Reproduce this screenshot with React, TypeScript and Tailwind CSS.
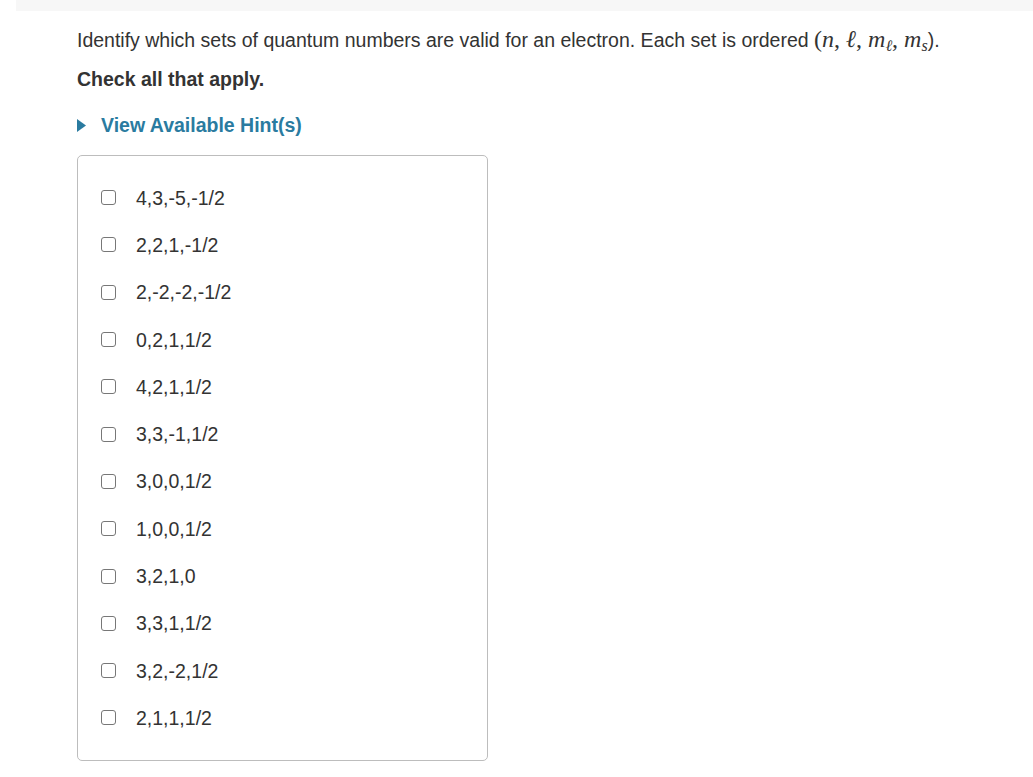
const options = [
  '4,3,-5,-1/2',
  '2,2,1,-1/2',
  '2,-2,-2,-1/2',
  '0,2,1,1/2',
  '4,2,1,1/2',
  '3,3,-1,1/2',
  '3,0,0,1/2',
  '1,0,0,1/2',
  '3,2,1,0',
  '3,3,1,1/2',
  '3,2,-2,1/2',
  '2,1,1,1/2',
];

function MathVars() {
  return (
    <span className="font-['Liberation_Serif',serif] text-[24px] leading-none">
      <span className="not-italic">(</span>
      <i>n</i>
      <span className="not-italic">, </span>
      <i>ℓ</i>
      <span className="not-italic">, </span>
      <i>m</i>
      <sub className="text-[16px] italic">ℓ</sub>
      <span className="not-italic">, </span>
      <i>m</i>
      <sub className="text-[16px] italic">s</sub>
      <span className="font-['Liberation_Sans',Arial,sans-serif] text-[19.5px] not-italic">)</span>
    </span>
  );
}

export default function App() {
  return (
    <div className="min-h-[777px] bg-white font-['Liberation_Sans',Arial,sans-serif] text-[#333]">
      <div className="ml-4 h-[11px] bg-[#f7f7f7]" />
      <div className="pl-[77px] pt-[16px]">
        <p className="text-[19.5px] leading-6">
          Identify which sets of quantum numbers are valid for an electron. Each set is ordered{' '}
          <MathVars />.
        </p>
        <p className="mt-[15px] text-[19.5px] font-bold leading-6">Check all that apply.</p>
        <button className="mt-[22px] flex items-center gap-[15px] text-[19.5px] font-bold leading-6 text-[#2a7ba0]">
          <svg width="9" height="13" viewBox="0 0 9 13">
            <path d="M0 0 L9 6.5 L0 13 Z" fill="#2a7ba0" />
          </svg>
          <span>View Available Hint(s)</span>
        </button>
        <div className="mt-[18px] w-[411px] rounded-[5px] border border-[#bdbdbd] px-[23px] pb-[18px] pt-[18px]">
          {options.map((opt) => (
            <label key={opt} className="flex h-[47.3px] items-center gap-[20px] text-[19.5px] leading-6">
              <span className="h-[15px] w-[15px] shrink-0 rounded-[3px] border border-[#777] bg-white" />
              <span>{opt}</span>
            </label>
          ))}
        </div>
      </div>
    </div>
  );
}
